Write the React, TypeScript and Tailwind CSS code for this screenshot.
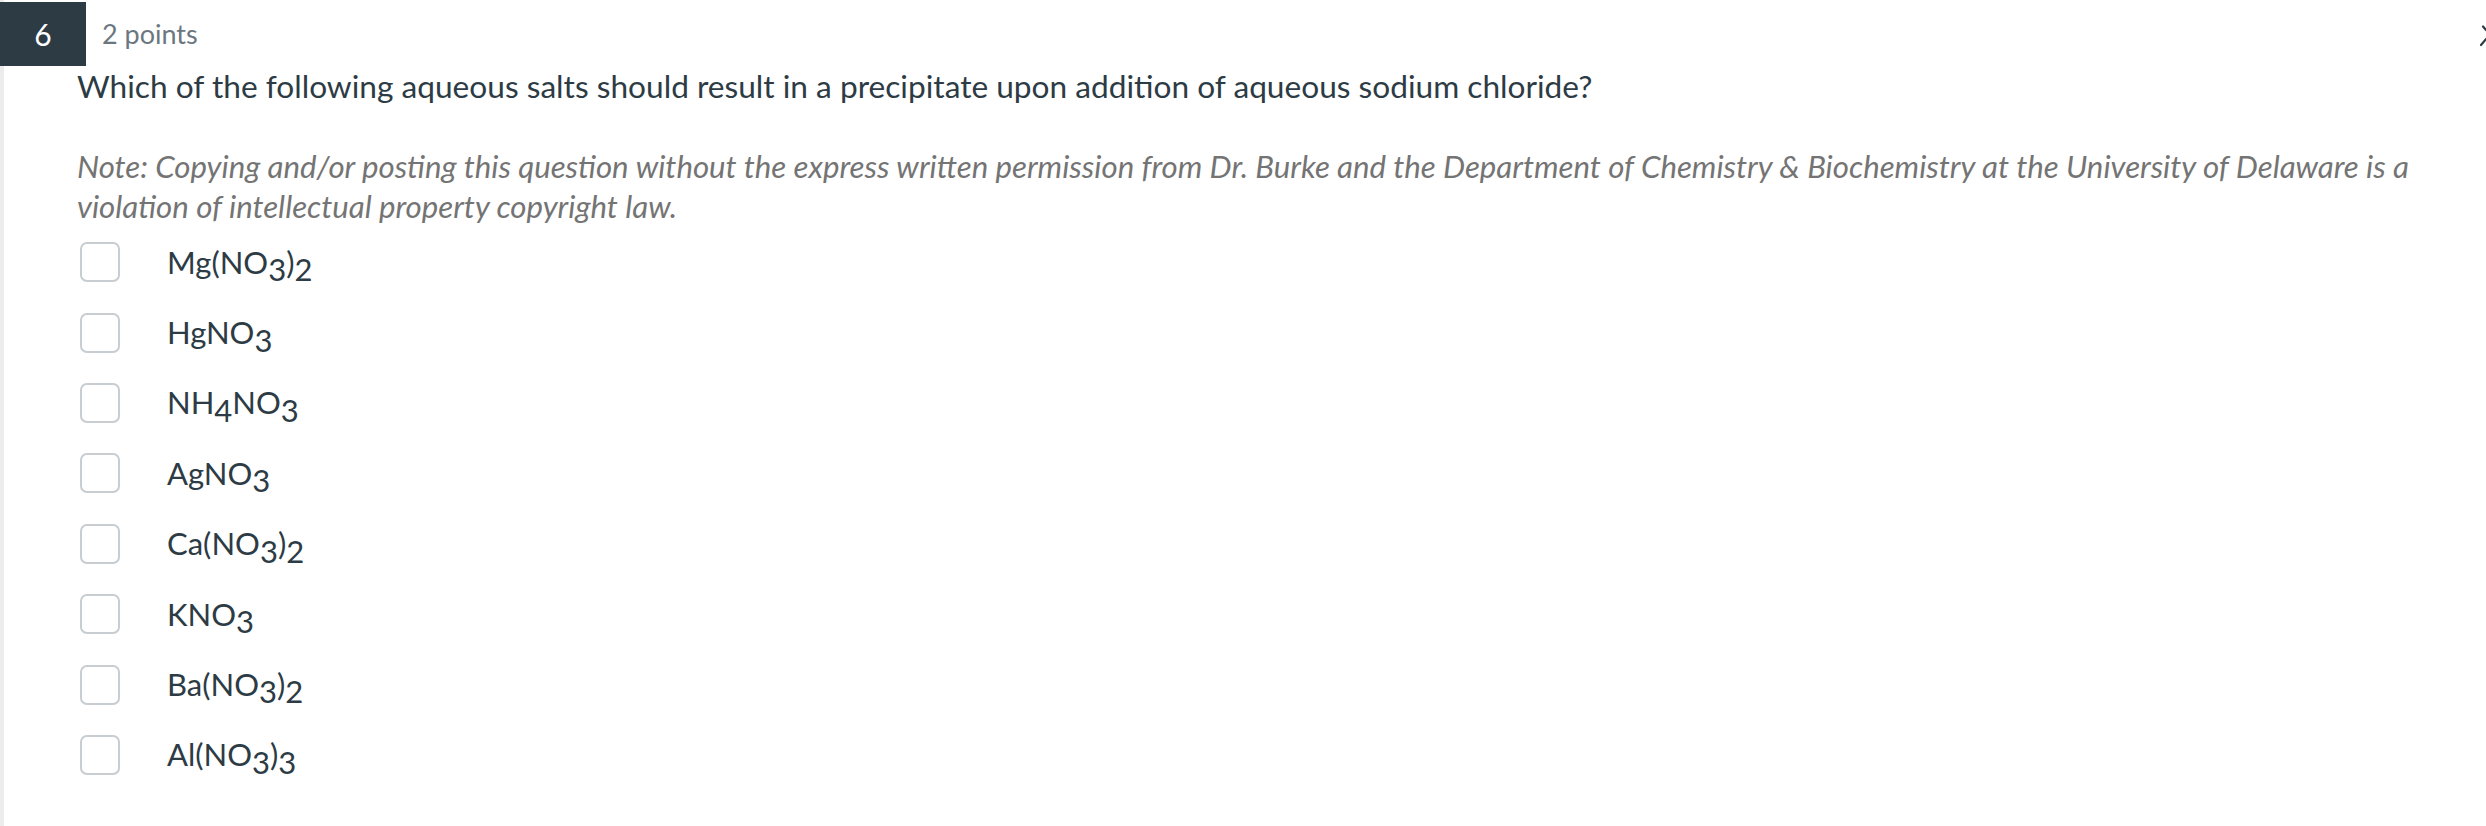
import React from "react";

type Choice = { id: number; parts: (string | { sub: string })[] };

const choices: Choice[] = [
  { id: 1, parts: ["Mg(NO", { sub: "3" }, ")", { sub: "2" }] },
  { id: 2, parts: ["HgNO", { sub: "3" }] },
  { id: 3, parts: ["NH", { sub: "4" }, "NO", { sub: "3" }] },
  { id: 4, parts: ["AgNO", { sub: "3" }] },
  { id: 5, parts: ["Ca(NO", { sub: "3" }, ")", { sub: "2" }] },
  { id: 6, parts: ["KNO", { sub: "3" }] },
  { id: 7, parts: ["Ba(NO", { sub: "3" }, ")", { sub: "2" }] },
  { id: 8, parts: ["Al(NO", { sub: "3" }, ")", { sub: "3" }] },
];

function Formula({ parts }: { parts: Choice["parts"] }) {
  return (
    <span>
      {parts.map((p, i) =>
        typeof p === "string" ? (
          <span key={i}>{p}</span>
        ) : (
          <sub key={i} className="relative top-[0.24em] text-[1em] align-baseline">
            {p.sub}
          </sub>
        )
      )}
    </span>
  );
}

export default function App() {
  return (
    <div
      className="min-h-[826px] w-full overflow-hidden bg-white text-[#2d3b45]"
      style={{ fontFamily: "Lato, 'Open Sans', sans-serif" }}
    >
      <div className="border-l-4 border-[#ececec] pb-10">
        {/* header */}
        <div className="-ml-1 flex items-start pt-[2px]">
          <div className="flex h-[64px] w-[86px] items-center justify-center bg-[#2d3b45] text-[30px] text-white">
            6
          </div>
          <div className="ml-4 flex h-[64px] items-center text-[27px] text-[#6b7780]">2 points</div>
          <div className="ml-auto mt-[23px] w-[6px] overflow-hidden">
            <svg width="20" height="22" viewBox="0 0 20 22" fill="none" stroke="#2d3b45" strokeWidth="2.2" strokeLinecap="round">
              <path d="M3 1.5 L6 5" />
              <path d="M1 20 L7 13" />
            </svg>
          </div>
        </div>

        <div className="pl-[73px] pr-[40px]">
          <p className="text-[31.65px] leading-[40px]">
            Which of the following aqueous salts should result in a precipitate upon addition of aqueous sodium chloride?
          </p>
          <p className="mt-[40px] text-[31.2px] italic leading-[40px] text-[#747474]">
            Note: Copying and/or posting this question without the express written permission from Dr. Burke and the
            Department of Chemistry &amp; Biochemistry at the University of Delaware is a violation of intellectual
            property copyright law.
          </p>

          {/* answers */}
          <div className="mt-px">
            {choices.map((c) => (
              <label key={c.id} className="flex h-[70.4px] items-center">
                <span className="ml-[3px] h-[40px] w-[40px] shrink-0 rounded-[7px] border-2 border-[#c7cdd1] bg-white" />
                <span className="ml-[47px] text-[31px] leading-none">
                  <Formula parts={c.parts} />
                </span>
              </label>
            ))}
          </div>
        </div>
      </div>
    </div>
  );
}
